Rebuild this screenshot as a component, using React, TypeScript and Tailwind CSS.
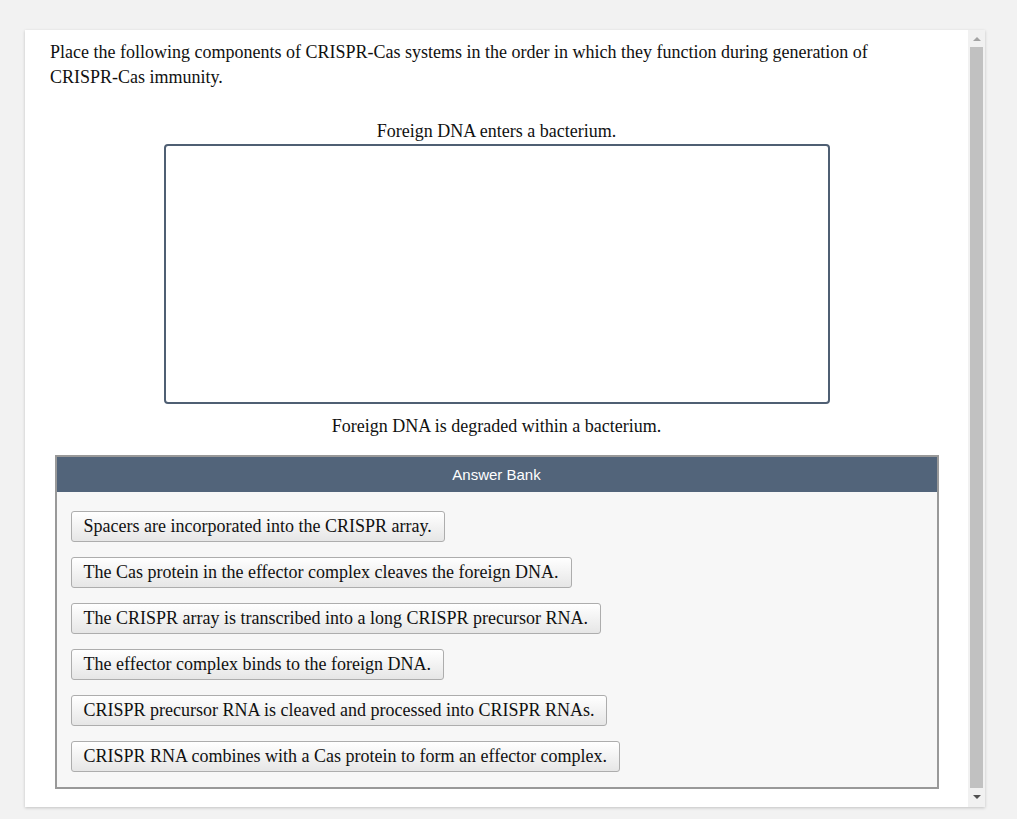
import React from "react";

const answers = [
  "Spacers are incorporated into the CRISPR array.",
  "The Cas protein in the effector complex cleaves the foreign DNA.",
  "The CRISPR array is transcribed into a long CRISPR precursor RNA.",
  "The effector complex binds to the foreign DNA.",
  "CRISPR precursor RNA is cleaved and processed into CRISPR RNAs.",
  "CRISPR RNA combines with a Cas protein to form an effector complex.",
];

const Scrollbar: React.FC = () => (
  <div className="w-[17px] h-full bg-[#f1f1f1] flex flex-col">
    <div className="h-[17px] flex items-center justify-center">
      <svg width="8" height="5" viewBox="0 0 8 5">
        <path d="M0 5 L4 1 L8 5 Z" fill="#a3a3a3" />
      </svg>
    </div>
    <div className="flex-1 px-[2px]">
      <div className="h-full bg-[#c1c1c1]" />
    </div>
    <div className="h-[19px] flex items-center justify-center">
      <svg width="8" height="5" viewBox="0 0 8 5">
        <path d="M0 0 L8 0 L4 4 Z" fill="#505050" />
      </svg>
    </div>
  </div>
);

export default function App() {
  return (
    <div className="min-h-[819px] bg-[#f2f2f2] pt-[30px] pl-[25px]">
      <div className="w-[960px] h-[777px] bg-white flex shadow-[0_1px_3px_rgba(0,0,0,0.2)]">
        <div className="flex-1 px-[25px] pt-[10px] text-[18px] leading-[25px] text-[#111] font-['Liberation_Serif',serif]">
          <p className="max-w-[870px]">
            Place the following components of CRISPR-Cas systems in the order in which they function during generation of
            CRISPR-Cas immunity.
          </p>
          <div className="mt-[29px] text-center">Foreign DNA enters a bacterium.</div>
          <div className="w-[666px] h-[260px] mx-auto border-2 border-[#4f5f73] rounded-[4px]" />
          <div className="mt-[10px] text-center">Foreign DNA is degraded within a bacterium.</div>
          <div className="w-[884px] mx-auto mt-[16px] border-2 border-[#999] bg-[#f7f7f7]">
            <div className="h-[35px] bg-[#52647a] text-white text-[15px] flex items-center justify-center font-['Liberation_Sans',Arial,sans-serif]">
              Answer Bank
            </div>
            <div className="px-[14px] pt-[19px] pb-[15px] flex flex-col items-start gap-[15px]">
              {answers.map((a) => (
                <div
                  key={a}
                  className="h-[31px] px-[12px] flex items-center border border-[#adadad] rounded-[3px] bg-gradient-to-b from-white to-[#e6e6e6]"
                >
                  {a}
                </div>
              ))}
            </div>
          </div>
        </div>
        <Scrollbar />
      </div>
    </div>
  );
}
